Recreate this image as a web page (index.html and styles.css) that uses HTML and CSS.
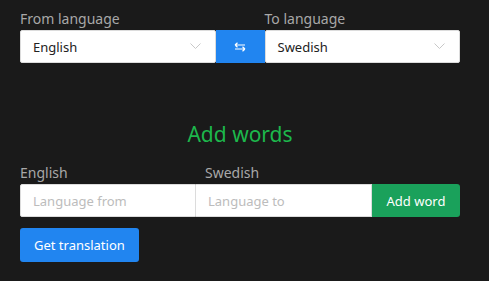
FILE: index.html
```html
<!DOCTYPE html>
<html lang="en">
<head>
    <meta charset="UTF-8">
    <meta name="viewport" content="width=device-width, initial-scale=1.0">
    <title>Translator</title>
    <link rel="stylesheet" href="styles.css">
</head>
<body>

<div id="app">
    <div class="langRow">
        <div class="langCol">
            <div class="label">From language</div>
            <div class="select">
                <span>English</span>
                <svg class="chevron" width="11" height="7" viewBox="0 0 11 7"><path d="M0.5 0.5 L5.5 5.5 L10.5 0.5" fill="none" stroke="#c8c8c8" stroke-width="1"/></svg>
            </div>
        </div>
        <div class="swapBtn">
            <svg width="12" height="10" viewBox="0 0 12 10"><path d="M1 3 H11 M1 3 L3.5 0.8 M1 3 L3.5 5.2 M11 7 H1 M11 7 L8.5 4.8 M11 7 L8.5 9.2" fill="none" stroke="#fff" stroke-width="1.2"/></svg>
        </div>
        <div class="langCol">
            <div class="label">To language</div>
            <div class="select">
                <span>Swedish</span>
                <svg class="chevron" width="11" height="7" viewBox="0 0 11 7"><path d="M0.5 0.5 L5.5 5.5 L10.5 0.5" fill="none" stroke="#c8c8c8" stroke-width="1"/></svg>
            </div>
        </div>
    </div>

    <h2 class="title">Add words</h2>

    <div class="wordRow">
        <div class="wordCol">
            <div class="label">English</div>
            <input class="wordInput first" placeholder="Language from">
        </div>
        <div class="wordCol">
            <div class="label second">Swedish</div>
            <input class="wordInput" placeholder="Language to">
        </div>
        <button class="addBtn">Add word</button>
    </div>

    <button class="getBtn">Get translation</button>
</div>

</body>
</html>
```

FILE: styles.css
```css
html, body {
    margin: 0;
    background-color: #1a1a1a;
    font-family: "Noto Sans", "Open Sans", sans-serif;
    color: #a8a8a8;
}

#app {
    width: 440px;
    padding: 8px 20px;
}

.langRow {
    display: flex;
    align-items: flex-end;
}

.langCol {
    flex: 1;
}

.label {
    font-size: 14px;
    line-height: 22px;
    color: #a8a8a8;
}

.label.second {
    padding-left: 9px;
}

.select {
    display: flex;
    align-items: center;
    justify-content: space-between;
    height: 33px;
    box-sizing: border-box;
    padding: 0 14px 0 12px;
    background-color: #fff;
    border: 1px solid #dcdcdc;
    border-radius: 2px;
    font-size: 13px;
    color: #222;
}

.swapBtn {
    width: 49px;
    height: 33px;
    display: flex;
    align-items: center;
    justify-content: center;
    background-color: #2185f0;
}

.title {
    margin: 57px 0 14px;
    text-align: center;
    font-size: 21px;
    font-weight: normal;
    color: #1db84c;
    line-height: 28px;
}

.wordRow {
    display: flex;
    align-items: flex-end;
}

.wordCol {
    flex: 1;
}

.wordInput {
    display: block;
    width: 100%;
    height: 33px;
    box-sizing: border-box;
    margin: 0;
    padding: 0 12px;
    border: 1px solid #dcdcdc;
    border-left: none;
    background-color: #fff;
    font-family: inherit;
    font-size: 13px;
    outline: none;
}

.wordInput.first {
    border-left: 1px solid #dcdcdc;
    border-radius: 2px 0 0 2px;
}

.wordInput::placeholder {
    color: #bcbcbc;
}

.addBtn {
    width: 88px;
    height: 33px;
    border: none;
    border-radius: 0 3px 3px 0;
    background-color: #1aa15b;
    color: #fff;
    font-family: inherit;
    font-size: 13px;
}

.getBtn {
    margin-top: 11px;
    height: 34px;
    padding: 0 14px;
    border: none;
    border-radius: 3px;
    background-color: #2185f0;
    color: #fff;
    font-family: inherit;
    font-size: 13px;
}
```
